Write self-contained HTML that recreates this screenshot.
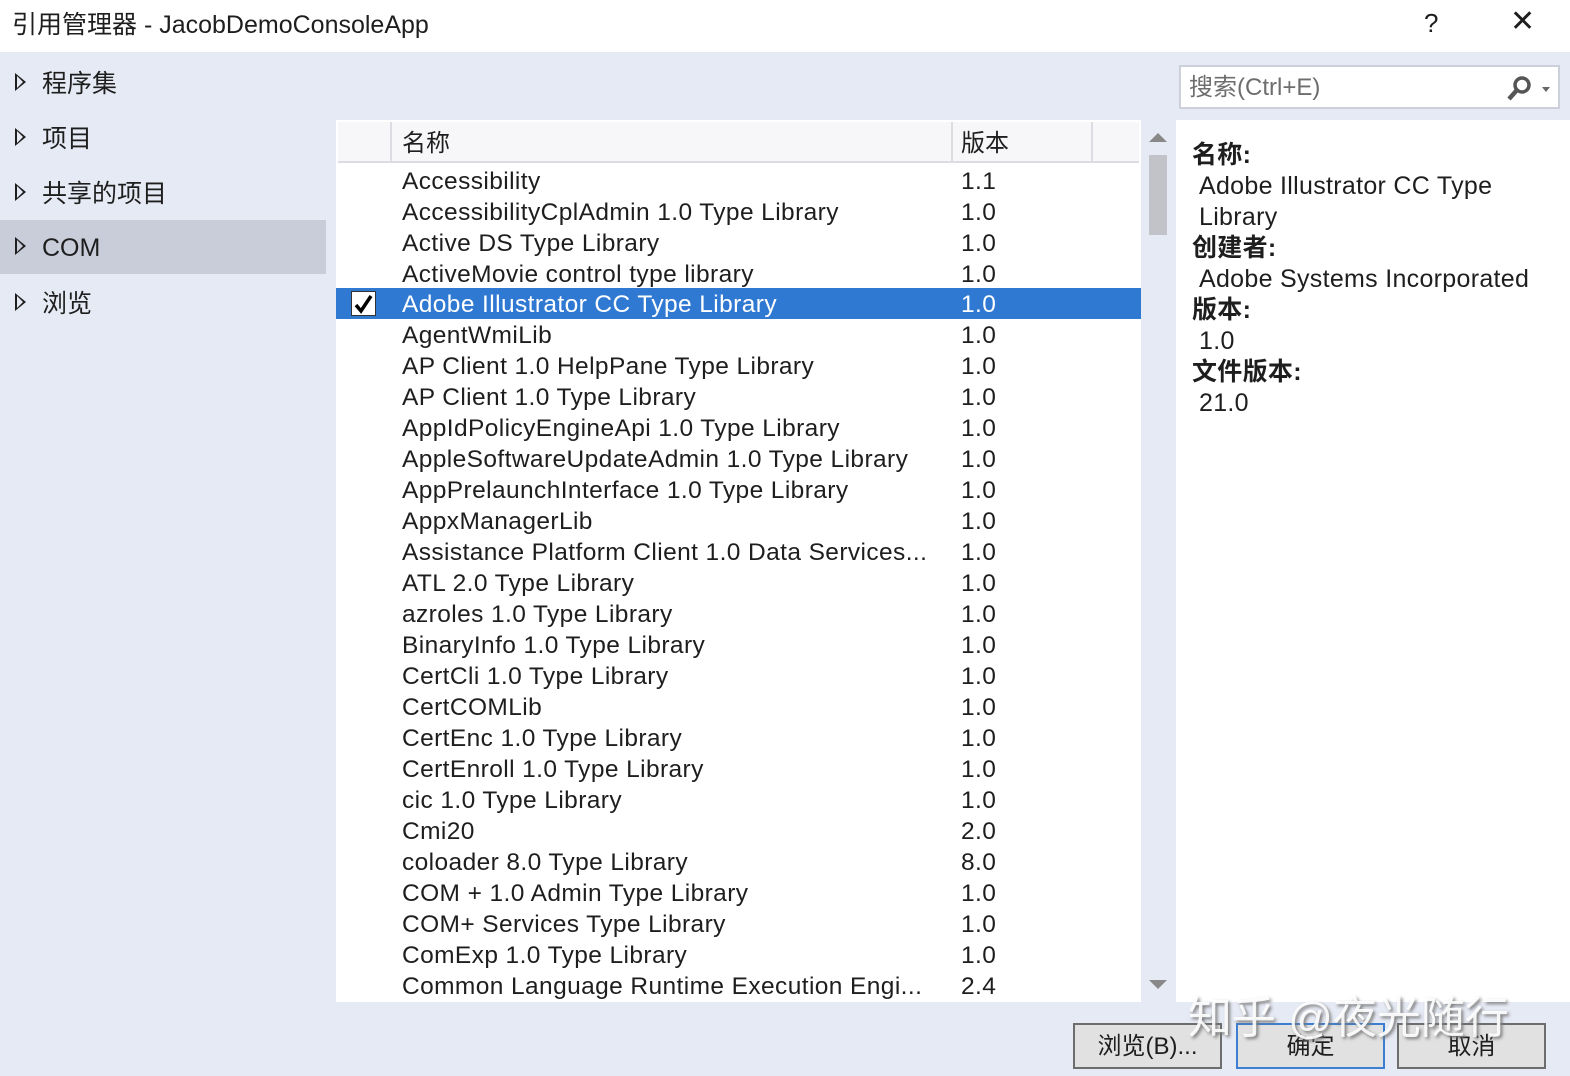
<!DOCTYPE html>
<html><head><meta charset="utf-8"><style>
*{margin:0;padding:0;box-sizing:border-box}
body{width:1570px;height:1076px;background:#e6eaf4;font-family:"Liberation Sans","Noto Sans CJK SC",sans-serif;color:#1e1e1e;position:relative;overflow:hidden}
.abs{position:absolute}
.title{left:0;top:0;width:1570px;height:52px;background:#fff;font-size:25px;line-height:50px;padding-left:12px}
.nav{left:0;width:326px;height:54px;font-size:25px;line-height:56px;padding-left:42px}
.tri{position:absolute;left:15px;top:17px;width:0;height:0;border-left:11px solid #1e1e1e;border-top:9px solid transparent;border-bottom:9px solid transparent}
.tri::after{content:"";position:absolute;left:-9px;top:-6px;border-left:6px solid #e6eaf4;border-top:6px solid transparent;border-bottom:6px solid transparent}
.sel .tri::after{border-left-color:#c9cdd9}
.list{left:336px;top:120px;width:805px;height:882px;background:#fff;overflow:hidden}
.hdr{position:absolute;left:2px;top:2px;width:801px;height:41px;background:#f7f7f9;border-bottom:2px solid #dcdce2;font-size:24px;line-height:44px}
.row{position:absolute;left:0;width:805px;height:31px;font-size:24.5px;line-height:33px;letter-spacing:0.4px}
.row span{position:absolute;left:66px;white-space:nowrap}
.row b{position:absolute;left:625px;font-weight:normal}
.row.s{background:#3079d2;color:#fff}
.det{left:1176px;top:120px;width:394px;height:882px;background:#fff;font-size:25px;line-height:31px;padding:20px 0 0 16px;letter-spacing:0.3px}
.det .k{font-weight:bold}
.det .v{padding-left:7px}
.btn{top:1023px;height:46px;width:149px;background:#e1e1e1;border:2px solid #6d6d6d;font-size:24px;line-height:44px;text-align:center}
</style></head><body>
<div class="abs title">引用管理器 - JacobDemoConsoleApp</div>
<div class="abs" style="left:1424px;top:8px;font-size:26px">?</div>
<div class="abs" style="left:1510px;top:4px;font-size:30px">✕</div>

<div class="abs nav" style="top:56px"><i class="tri"></i>程序集</div>
<div class="abs nav" style="top:111px"><i class="tri"></i>项目</div>
<div class="abs nav" style="top:166px"><i class="tri"></i>共享的项目</div>
<div class="abs nav sel" style="top:220px;background:#c9cdd9"><i class="tri"></i>COM</div>
<div class="abs nav" style="top:276px"><i class="tri"></i>浏览</div>

<div class="abs" style="left:1179px;top:65px;width:381px;height:44px;background:#fff;border:2px solid #ccd0da;font-size:24px;line-height:42px;padding-left:8px;color:#6d6d6d">搜索(Ctrl+E)
<svg class="abs" style="left:324px;top:7px" width="50" height="28"><circle cx="17" cy="11" r="7" fill="none" stroke="#555" stroke-width="3.5"/><line x1="12" y1="16" x2="4" y2="25" stroke="#555" stroke-width="4.5"/><path d="M37 13l8 0-4 5z" fill="#666"/></svg></div>

<div class="abs list">
<div class="hdr"><div class="abs" style="left:52px;top:0;width:2px;height:41px;background:#dcdce2"></div><span class="abs" style="left:64px">名称</span><div class="abs" style="left:613px;top:0;width:2px;height:41px;background:#dcdce2"></div><span class="abs" style="left:623px">版本</span><div class="abs" style="left:753px;top:0;width:2px;height:41px;background:#dcdce2"></div></div>
<div class="row" style="top:45px"><span>Accessibility</span><b>1.1</b></div>
<div class="row" style="top:76px"><span>AccessibilityCplAdmin 1.0 Type Library</span><b>1.0</b></div>
<div class="row" style="top:107px"><span>Active DS Type Library</span><b>1.0</b></div>
<div class="row" style="top:138px"><span>ActiveMovie control type library</span><b>1.0</b></div>
<div class="row s" style="top:168px"><div class="abs" style="left:15px;top:3px;width:25px;height:25px;background:#fff;border:1px solid #333"><svg width="23" height="23"><path d="M4 12l5 6 10-15" fill="none" stroke="#000" stroke-width="3.5"/></svg></div><span>Adobe Illustrator CC Type Library</span><b>1.0</b></div>
<div class="row" style="top:199px"><span>AgentWmiLib</span><b>1.0</b></div>
<div class="row" style="top:230px"><span>AP Client 1.0 HelpPane Type Library</span><b>1.0</b></div>
<div class="row" style="top:261px"><span>AP Client 1.0 Type Library</span><b>1.0</b></div>
<div class="row" style="top:292px"><span>AppIdPolicyEngineApi 1.0 Type Library</span><b>1.0</b></div>
<div class="row" style="top:323px"><span>AppleSoftwareUpdateAdmin 1.0 Type Library</span><b>1.0</b></div>
<div class="row" style="top:354px"><span>AppPrelaunchInterface 1.0 Type Library</span><b>1.0</b></div>
<div class="row" style="top:385px"><span>AppxManagerLib</span><b>1.0</b></div>
<div class="row" style="top:416px"><span>Assistance Platform Client 1.0 Data Services...</span><b>1.0</b></div>
<div class="row" style="top:447px"><span>ATL 2.0 Type Library</span><b>1.0</b></div>
<div class="row" style="top:478px"><span>azroles 1.0 Type Library</span><b>1.0</b></div>
<div class="row" style="top:509px"><span>BinaryInfo 1.0 Type Library</span><b>1.0</b></div>
<div class="row" style="top:540px"><span>CertCli 1.0 Type Library</span><b>1.0</b></div>
<div class="row" style="top:571px"><span>CertCOMLib</span><b>1.0</b></div>
<div class="row" style="top:602px"><span>CertEnc 1.0 Type Library</span><b>1.0</b></div>
<div class="row" style="top:633px"><span>CertEnroll 1.0 Type Library</span><b>1.0</b></div>
<div class="row" style="top:664px"><span>cic 1.0 Type Library</span><b>1.0</b></div>
<div class="row" style="top:695px"><span>Cmi20</span><b>2.0</b></div>
<div class="row" style="top:726px"><span>coloader 8.0 Type Library</span><b>8.0</b></div>
<div class="row" style="top:757px"><span>COM + 1.0 Admin Type Library</span><b>1.0</b></div>
<div class="row" style="top:788px"><span>COM+ Services Type Library</span><b>1.0</b></div>
<div class="row" style="top:819px"><span>ComExp 1.0 Type Library</span><b>1.0</b></div>
<div class="row" style="top:850px"><span>Common Language Runtime Execution Engi...</span><b>2.4</b></div>
</div>

<div class="abs" style="left:1141px;top:120px;width:35px;height:882px;background:#e6eaf4"></div>
<div class="abs" style="left:1149px;top:133px;border-left:9px solid transparent;border-right:9px solid transparent;border-bottom:9px solid #888"></div>
<div class="abs" style="left:1149px;top:155px;width:18px;height:80px;background:#c2c3c9"></div>
<div class="abs" style="left:1149px;top:980px;border-left:9px solid transparent;border-right:9px solid transparent;border-top:9px solid #888"></div>

<div class="abs det">
<div class="k">名称:</div><div class="v">Adobe Illustrator CC Type<br>Library</div>
<div class="k">创建者:</div><div class="v">Adobe Systems Incorporated</div>
<div class="k">版本:</div><div class="v">1.0</div>
<div class="k">文件版本:</div><div class="v">21.0</div>
</div>

<div class="abs btn" style="left:1073px">浏览(B)...</div>
<div class="abs btn" style="left:1236px;border-color:#3c7fd0">确定</div>
<div class="abs btn" style="left:1397px">取消</div>

<div class="abs" style="left:1188px;top:982px;font-size:44px;color:rgba(255,255,255,0.9);text-shadow:2px 2px 3px #777;white-space:nowrap;z-index:5">知乎 @夜光随行</div>
</body></html>
